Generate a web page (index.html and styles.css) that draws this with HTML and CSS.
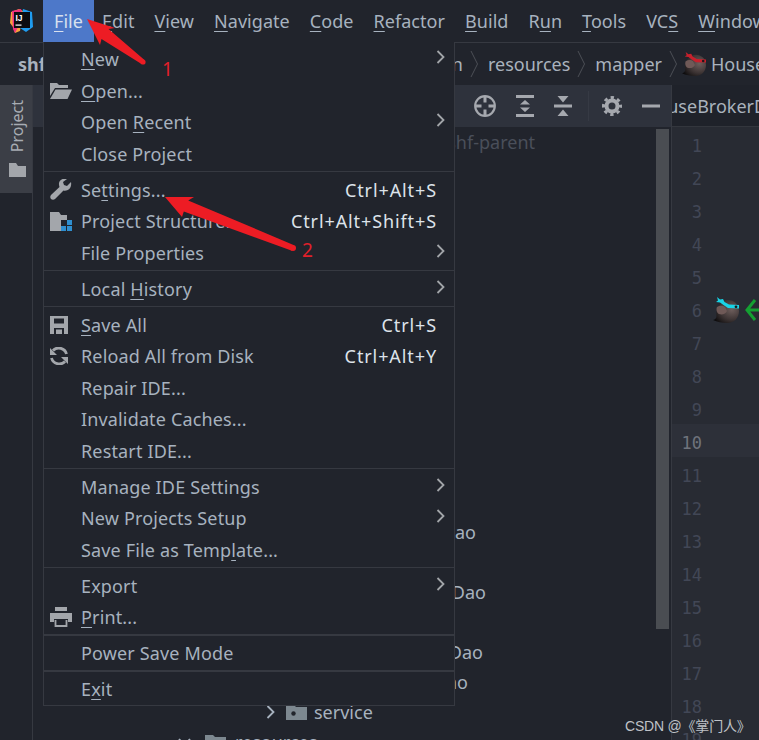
FILE: index.html
```html
<!DOCTYPE html>
<html lang="en">
<head>
<meta charset="utf-8">
<title>IDE File Menu</title>
<link rel="stylesheet" href="styles.css">
</head>
<body>
<svg class="defs" width="0" height="0" aria-hidden="true">
  <defs>
    <radialGradient id="ball" cx="0.72" cy="0.42" r="0.8">
      <stop offset="0" stop-color="#6e5e5c"/><stop offset="0.55" stop-color="#3d3434"/><stop offset="1" stop-color="#0a090a"/>
    </radialGradient>
    <symbol id="mole" viewBox="0 0 26 26">
      <path d="M0 23c2.500-.5 3.500-2 3.500-4C2.500 10 8 3 15 3c6 0 11 4.500 11 11 0 7-5 12-11.500 12C9 26 4 25 0 23z" fill="url(#ball)"/>
      <path d="M4 10c3-2 6-1.500 8 0l2 4c-1 3-5 4-8 3-2.500-1-3-5-2-7z" fill="#6f5957"/>
      <path d="M4 0l3 2.500L10 2l1.500 3L16 7.500l10 .5v3.500l-11-.5L10.500 8 7 5.500 3 5l2-1.500z" fill="currentColor"/>
      <circle cx="23" cy="9.800" r="1.400" fill="#1b1b1d"/>
    </symbol>
    <symbol id="chev" viewBox="0 0 9 14"><path d="M1.500 1l6 6-6 6" fill="none" stroke="currentColor" stroke-width="1.800"/></symbol>
    <symbol id="crumb" viewBox="0 0 9 28"><path d="M1 1l6.500 13-6.500 13" fill="none" stroke="currentColor" stroke-width="1"/></symbol>
  </defs>
</svg>

<div class="app">
  <header class="menubar">
    <div class="logo">
      <svg width="24" height="26" viewBox="0 0 24 26">
        <path d="M2 4l8-3 4 2-3 20-5 2-2-6-3-4z" fill="#f9a13c"/>
        <path d="M3 3l9-2 2 8-8 16-2-4z" fill="#f0317f"/>
        <path d="M14 1l9 3 1 15-7 5-6-4z" fill="#1f9cf0"/>
        <rect x="5" y="4" width="16" height="16" fill="#0c0c10"/>
        <text x="6.500" y="12.500" class="logo-text">IJ</text>
        <rect x="6.500" y="16.500" width="6" height="1.200" fill="#fff"/>
      </svg>
    </div>
    <nav class="menus">
      <span class="top-item is-open"><u>F</u>ile</span>
      <span class="top-item"><u>E</u>dit</span>
      <span class="top-item"><u>V</u>iew</span>
      <span class="top-item"><u>N</u>avigate</span>
      <span class="top-item"><u>C</u>ode</span>
      <span class="top-item"><u>R</u>efactor</span>
      <span class="top-item"><u>B</u>uild</span>
      <span class="top-item">R<u>u</u>n</span>
      <span class="top-item"><u>T</u>ools</span>
      <span class="top-item">VC<u>S</u></span>
      <span class="top-item"><u>W</u>indow</span>
    </nav>
  </header>

  <div class="navbar">
    <div class="nav-root"><b class="root-name">shf-parent</b><span>main</span></div>
    <svg class="crumb-sep" width="9" height="28"><use href="#crumb"/></svg>
    <span>resources</span>
    <svg class="crumb-sep" width="9" height="28"><use href="#crumb"/></svg>
    <span>mapper</span>
    <svg class="crumb-sep" width="9" height="28"><use href="#crumb"/></svg>
    <svg class="mole-red" width="24" height="26"><use href="#mole"/></svg>
    <span class="file-name">HouseBrokerDao.xml</span>
  </div>

  <div class="content">
    <aside class="stripe">
      <div class="stripe-tab">
        <span class="stripe-label">Project</span>
        <svg width="17" height="14" viewBox="0 0 17 14"><path d="M0 0h7l2 3h8v11H0z" fill="#a3a6ab"/></svg>
      </div>
    </aside>

    <section class="project">
      <div class="tool-header">
        <svg width="22" height="22" viewBox="0 0 22 22" class="tool-icon"><circle cx="11" cy="11" r="9.800" fill="none" stroke="currentColor" stroke-width="2.200"/><path d="M11 1v6.500M11 14.500V21M1 11h6.500M14.500 11H21" stroke="currentColor" stroke-width="3"/></svg>
        <svg width="18" height="22" viewBox="0 0 18 22" class="tool-icon"><path d="M0 0h18v3H0zM0 19h18v3H0zM9 5l5 4.500H4zM9 17l5-4.500H4z" fill="currentColor"/></svg>
        <svg width="18" height="20" viewBox="0 0 18 20" class="tool-icon"><path d="M0 8.600h18v2.800H0zM3.500 0h11L9 6.500zM3.500 20h11L9 13.500z" fill="currentColor"/></svg>
        <span class="tool-divider"></span>
        <svg width="20" height="20" viewBox="0 0 20 20" class="tool-icon"><circle cx="10" cy="10" r="5.500" fill="none" stroke="currentColor" stroke-width="4"/><circle cx="10" cy="10" r="8.500" fill="none" stroke="currentColor" stroke-width="3" stroke-dasharray="3.340 3.340" stroke-dashoffset="1.670"/></svg>
        <svg width="18" height="4" viewBox="0 0 18 4" class="tool-icon tool-minus"><rect width="18" height="3" y="0.500" fill="currentColor"/></svg>
      </div>
      <div class="tree">
        <div class="tree-row tree-root"><span>shf-parent</span></div>
        <div class="tree-gap-top"></div>
        <div class="tree-row tree-end-a"><span>HouseBrokerDao</span></div>
        <div class="tree-row"></div>
        <div class="tree-row tree-end-b"><span>HouseDictDao</span></div>
        <div class="tree-row"></div>
        <div class="tree-row tree-end-c"><span>HouseUserDao</span></div>
        <div class="tree-row tree-end-d"><span>UserDao</span></div>
        <div class="tree-row tree-service">
          <svg width="9" height="14"><use href="#chev"/></svg>
          <svg width="21" height="15" viewBox="0 0 21 15"><path d="M0 0h8l2 2h11v13H0z" fill="#7d8890"/><circle cx="7.500" cy="8.500" r="2.200" fill="#22252c"/></svg>
          <span>service</span>
        </div>
        <div class="tree-row tree-resources">
          <svg width="13" height="8" viewBox="0 0 13 8"><path d="M1 1l5.500 6L12 1" fill="none" stroke="currentColor" stroke-width="1.800"/></svg>
          <svg width="21" height="15" viewBox="0 0 21 15"><path d="M0 0h8l2 2h11v13H0z" fill="#7d8890"/></svg>
          <span>resources</span>
        </div>
        <div class="scroll-thumb"></div>
      </div>
    </section>

    <section class="editor">
      <div class="editor-tab"><span class="tab-title">HouseBrokerDao.xml</span></div>
      <div class="lines">
        <div class="line"><span class="num">1</span></div>
        <div class="line"><span class="num">2</span></div>
        <div class="line"><span class="num">3</span></div>
        <div class="line"><span class="num">4</span></div>
        <div class="line"><span class="num">5</span></div>
        <div class="line">
          <span class="num">6</span>
          <svg class="mole-cyan" width="26" height="26"><use href="#mole"/></svg>
          <svg class="green-arrow" width="16" height="24" viewBox="0 0 16 24"><path d="M10 2L2 12l8 10M2 12h14" fill="none" stroke="#14a032" stroke-width="3"/></svg>
        </div>
        <div class="line"><span class="num">7</span></div>
        <div class="line"><span class="num">8</span></div>
        <div class="line"><span class="num">9</span></div>
        <div class="line is-current"><span class="num">10</span></div>
        <div class="line"><span class="num">11</span></div>
        <div class="line"><span class="num">12</span></div>
        <div class="line"><span class="num">13</span></div>
        <div class="line"><span class="num">14</span></div>
        <div class="line"><span class="num">15</span></div>
        <div class="line"><span class="num">16</span></div>
        <div class="line"><span class="num">17</span></div>
        <div class="line"><span class="num">18</span></div>
        <div class="line"><span class="num">19</span></div>
      </div>
    </section>
  </div>

  <div class="menu">
    <div class="row"><span class="slot"></span><span class="label"><u>N</u>ew</span><svg class="sub" width="9" height="14"><use href="#chev"/></svg></div>
    <div class="row"><span class="slot"><svg width="22" height="16" viewBox="0 0 22 16"><path d="M0 0h7l2 2h9v3H5L0 13z" fill="#a3a6ab"/><path d="M5.500 6.500H22L17.500 16H0z" fill="#a3a6ab"/></svg></span><span class="label"><u>O</u>pen...</span></div>
    <div class="row"><span class="slot"></span><span class="label">Open <u>R</u>ecent</span><svg class="sub" width="9" height="14"><use href="#chev"/></svg></div>
    <div class="row"><span class="slot"></span><span class="label">Close Project</span></div>
    <div class="sep"></div>
    <div class="row"><span class="slot"><svg width="22" height="21" viewBox="0 0 22 21"><path d="M21 3l-4 4-3-1-1-3 4-3c-3-1-6 0-7.500 2.500C8.500 4.500 9 6.500 9.500 8L1 16c-1 1-1 3 0 4s3 1 4 0l8.500-8.500c2 .5 4 0 5.700-1.500C21 8.500 21.500 5.500 21 3z" fill="#a3a6ab"/></svg></span><span class="label">Se<u>t</u>tings...</span><span class="keys">Ctrl+Alt+S</span></div>
    <div class="row"><span class="slot"><svg width="22" height="19" viewBox="0 0 22 19"><path d="M0 0h9l2 3h6v5h-6v11H0z" fill="#a3a6ab"/><path d="M11 3h6v5h-6z" fill="#a3a6ab"/><path d="M17 8h5v5h-5zM11 14h5v5h-5zM17 14h5v5h-5z" fill="#2f8fd0"/></svg></span><span class="label">Project Structure...</span><span class="keys">Ctrl+Alt+Shift+S</span></div>
    <div class="row"><span class="slot"></span><span class="label">File Properties</span><svg class="sub" width="9" height="14"><use href="#chev"/></svg></div>
    <div class="sep"></div>
    <div class="row"><span class="slot"></span><span class="label">Local <u>H</u>istory</span><svg class="sub" width="9" height="14"><use href="#chev"/></svg></div>
    <div class="sep"></div>
    <div class="row"><span class="slot"><svg width="18" height="18" viewBox="0 0 18 18"><path fill-rule="evenodd" d="M0 0h18v18H0zM4 2.500v5h10v-5zM4 12v6h10v-6zM6 13.500h6V18H6z" fill="#a3a6ab"/></svg></span><span class="label"><u>S</u>ave All</span><span class="keys">Ctrl+S</span></div>
    <div class="row"><span class="slot"><svg width="18" height="18" viewBox="0 0 18 18"><path d="M16.500 7A8 8 0 0 0 3 3.500M1.500 11A8 8 0 0 0 15 14.500" fill="none" stroke="#a3a6ab" stroke-width="2.800"/><path d="M0 1v7h7zM18 17v-7h-7z" fill="#a3a6ab"/></svg></span><span class="label">Reload All from Disk</span><span class="keys">Ctrl+Alt+Y</span></div>
    <div class="row"><span class="slot"></span><span class="label">Repair IDE...</span></div>
    <div class="row"><span class="slot"></span><span class="label">Invalidate Caches...</span></div>
    <div class="row"><span class="slot"></span><span class="label">Restart IDE...</span></div>
    <div class="sep"></div>
    <div class="row"><span class="slot"></span><span class="label">Manage IDE Settings</span><svg class="sub" width="9" height="14"><use href="#chev"/></svg></div>
    <div class="row"><span class="slot"></span><span class="label">New Projects Setup</span><svg class="sub" width="9" height="14"><use href="#chev"/></svg></div>
    <div class="row"><span class="slot"></span><span class="label">Save File as Temp<u>l</u>ate...</span></div>
    <div class="sep"></div>
    <div class="row"><span class="slot"></span><span class="label">Export</span><svg class="sub" width="9" height="14"><use href="#chev"/></svg></div>
    <div class="row"><span class="slot"><svg width="22" height="20" viewBox="0 0 22 20"><path d="M5 0h12v4H5z" fill="#a3a6ab"/><path fill-rule="evenodd" d="M0 6h22v9h-4v-3H4v3H0z" fill="#a3a6ab"/><path d="M5.500 13v6h11v-6" fill="none" stroke="#a3a6ab" stroke-width="1.800"/></svg></span><span class="label"><u>P</u>rint...</span></div>
    <div class="sep sep-thick"></div>
    <div class="row"><span class="slot"></span><span class="label">Power Save Mode</span></div>
    <div class="sep sep-thick"></div>
    <div class="row"><span class="slot"></span><span class="label">E<u>x</u>it</span></div>
  </div>

  <svg class="annotations" width="759" height="740" viewBox="0 0 759 740">
    <path d="M87 19l28 9-6.500 1.100 36 30.900-3 4-40-25.100L100 45z" fill="#ed1c24"/>
    <circle cx="143" cy="62" r="2.600" fill="#ed1c24"/>
    <path d="M165 197h29l-5.800 3.400 105.900 44.800-2.200 5.600L183.800 211.600 182 217z" fill="#ed1c24"/>
    <circle cx="293" cy="248" r="3" fill="#ed1c24"/>
    <text x="162" y="76" class="mark">1</text>
    <text x="302" y="257" class="mark">2</text>
  </svg>

  <div class="watermark">CSDN @《掌门人》</div>
</div>
</body>
</html>
```
FILE: styles.css
```css
* { box-sizing: border-box; }
html, body { margin: 0; padding: 0; background: #21242c; }
body { font-family: "Noto Sans", "Noto Sans CJK SC", sans-serif; font-size: 18px; color: #a7b2bf; overflow: hidden; }
.defs { position: absolute; }
u { text-underline-offset: 3px; text-decoration-thickness: 1px; }

.app { position: relative; width: 759px; height: 740px; overflow: hidden; display: flex; flex-direction: column; background: #21242c; }

.menubar { flex: 0 0 43px; display: flex; border-bottom: 1px solid #363941; }
.logo { flex: 0 0 43px; display: flex; align-items: center; justify-content: center; padding-right: 2px; }
.logo-text { font-family: "Liberation Sans", sans-serif; font-size: 8.500px; font-weight: 700; fill: #fff; }
.menus { display: flex; white-space: nowrap; letter-spacing: 0.050px; }
.top-item { padding: 0 10px; line-height: 42px; }
.top-item.is-open { background: #4d78c9; color: #d8e0ee; padding: 0 11px; margin-right: -2px; }

.navbar { flex: 0 0 42px; display: flex; align-items: center; padding-left: 18px; white-space: nowrap; color: #a9b2bd; }
.nav-root { flex: 0 0 445px; display: flex; justify-content: space-between; }
.root-name { font-weight: 700; width: 25px; overflow: hidden; }
.crumb-sep { color: #4c4f56; margin: 0 9px 0 7px; flex: none; }
.mole-red { color: #c8202c; flex: none; margin: 0 5px 0 -5px; }

.content { flex: 1; display: flex; min-height: 0; }
.stripe { flex: 0 0 33px; border-right: 1px solid #363941; }
.stripe-tab { height: 108px; background: #3b3e46; display: flex; flex-direction: column; align-items: center; padding: 15px 0 0 2px; gap: 11px; }
.stripe-label { writing-mode: vertical-rl; transform: rotate(180deg); font-size: 16px; line-height: 20px; color: #a7acb3; }

.project { flex: 0 0 638px; display: flex; flex-direction: column; min-width: 0; }
.tool-header { flex: 0 0 42px; background: #2e323c; display: flex; align-items: center; padding-left: 441px; color: #a5a8ae; }
.tool-icon { flex: none; margin-right: 20px; }
.tool-divider { width: 1px; height: 30px; background: #363a44; margin: 0 13px 0 -4px; }
.tool-minus { margin-right: 0; }

.tree { position: relative; flex: 1; }
.tree-row { height: 30px; line-height: 30px; white-space: nowrap; display: flex; align-items: center; color: #a7b2bf; }
.tree-root { justify-content: flex-end; width: 502px; color: #4a4f5a; }
.tree-gap-top { height: 360px; }
.tree-end-a { justify-content: flex-end; width: 443px; }
.tree-end-b { justify-content: flex-end; width: 453px; }
.tree-end-c { justify-content: flex-end; width: 450px; }
.tree-end-d { justify-content: flex-end; width: 435px; }
.tree-service { padding-left: 233px; }
.tree-service svg:first-child { margin-right: 11px; }
.tree-service svg:nth-child(2) { margin-right: 7px; }
.tree-resources { padding-left: 145px; }
.tree-resources svg:first-child { margin-right: 14px; }
.tree-resources svg:nth-child(2) { margin-right: 9px; }
.scroll-thumb { position: absolute; left: 623px; top: 2px; width: 13px; height: 500px; background: #4a4d52; }

.editor { flex: 1; display: flex; flex-direction: column; border-left: 1px solid #363941; background: #282b33; min-width: 0; }
.editor-tab { flex: 0 0 42px; background: #1f222a; border-bottom: 1px solid #33363d; overflow: hidden; line-height: 42px; white-space: nowrap; }
.tab-title { display: block; margin-left: -29px; color: #a9b2bd; }
.lines { flex: 1; }
.line { height: 33px; display: flex; align-items: center; font-family: "DejaVu Sans Mono", monospace; font-size: 17px; color: #424756; white-space: nowrap; }
.num { flex: 0 0 30px; text-align: right; padding-top: 4px; }
.line.is-current { background: #2d3039; color: #6f737c; }
.mole-cyan { color: #19d3e6; flex: none; margin: 3px 6px 0 11px; }
.green-arrow { flex: none; margin-top: 3px; }

.menu { position: absolute; left: 43px; top: 42px; width: 412px; height: 664px; background: #21242c; border: 1px solid #363941; border-top: 0; display: flex; flex-direction: column; padding-top: 1.400px; letter-spacing: 0.150px; }
.row { flex: 0 0 31.600px; display: flex; align-items: center; padding: 0 9px 0 6px; white-space: nowrap; }
.slot { flex: 0 0 31px; display: flex; align-items: center; }
.label { flex: 1; color: #a7b2bf; }
.keys { color: #dde3ea; margin-right: 8px; letter-spacing: 0.900px; }
.sub { flex: none; color: #a2a5a9; margin-top: -4px; }
.sep { flex: 0 0 1px; background: #363941; margin: 1.600px 0; }
.sep-thick { flex-basis: 2px; margin: 1.100px 0; }

.annotations { position: absolute; left: 0; top: 0; pointer-events: none; }
.mark { font-family: "Noto Sans", sans-serif; font-size: 19px; fill: #e0202a; }
.watermark { position: absolute; left: 625px; top: 716px; font-family: "Liberation Sans", "Noto Sans CJK SC", sans-serif; font-size: 14px; line-height: 20px; color: #bfc2c7; white-space: nowrap; letter-spacing: -0.200px; }
```
